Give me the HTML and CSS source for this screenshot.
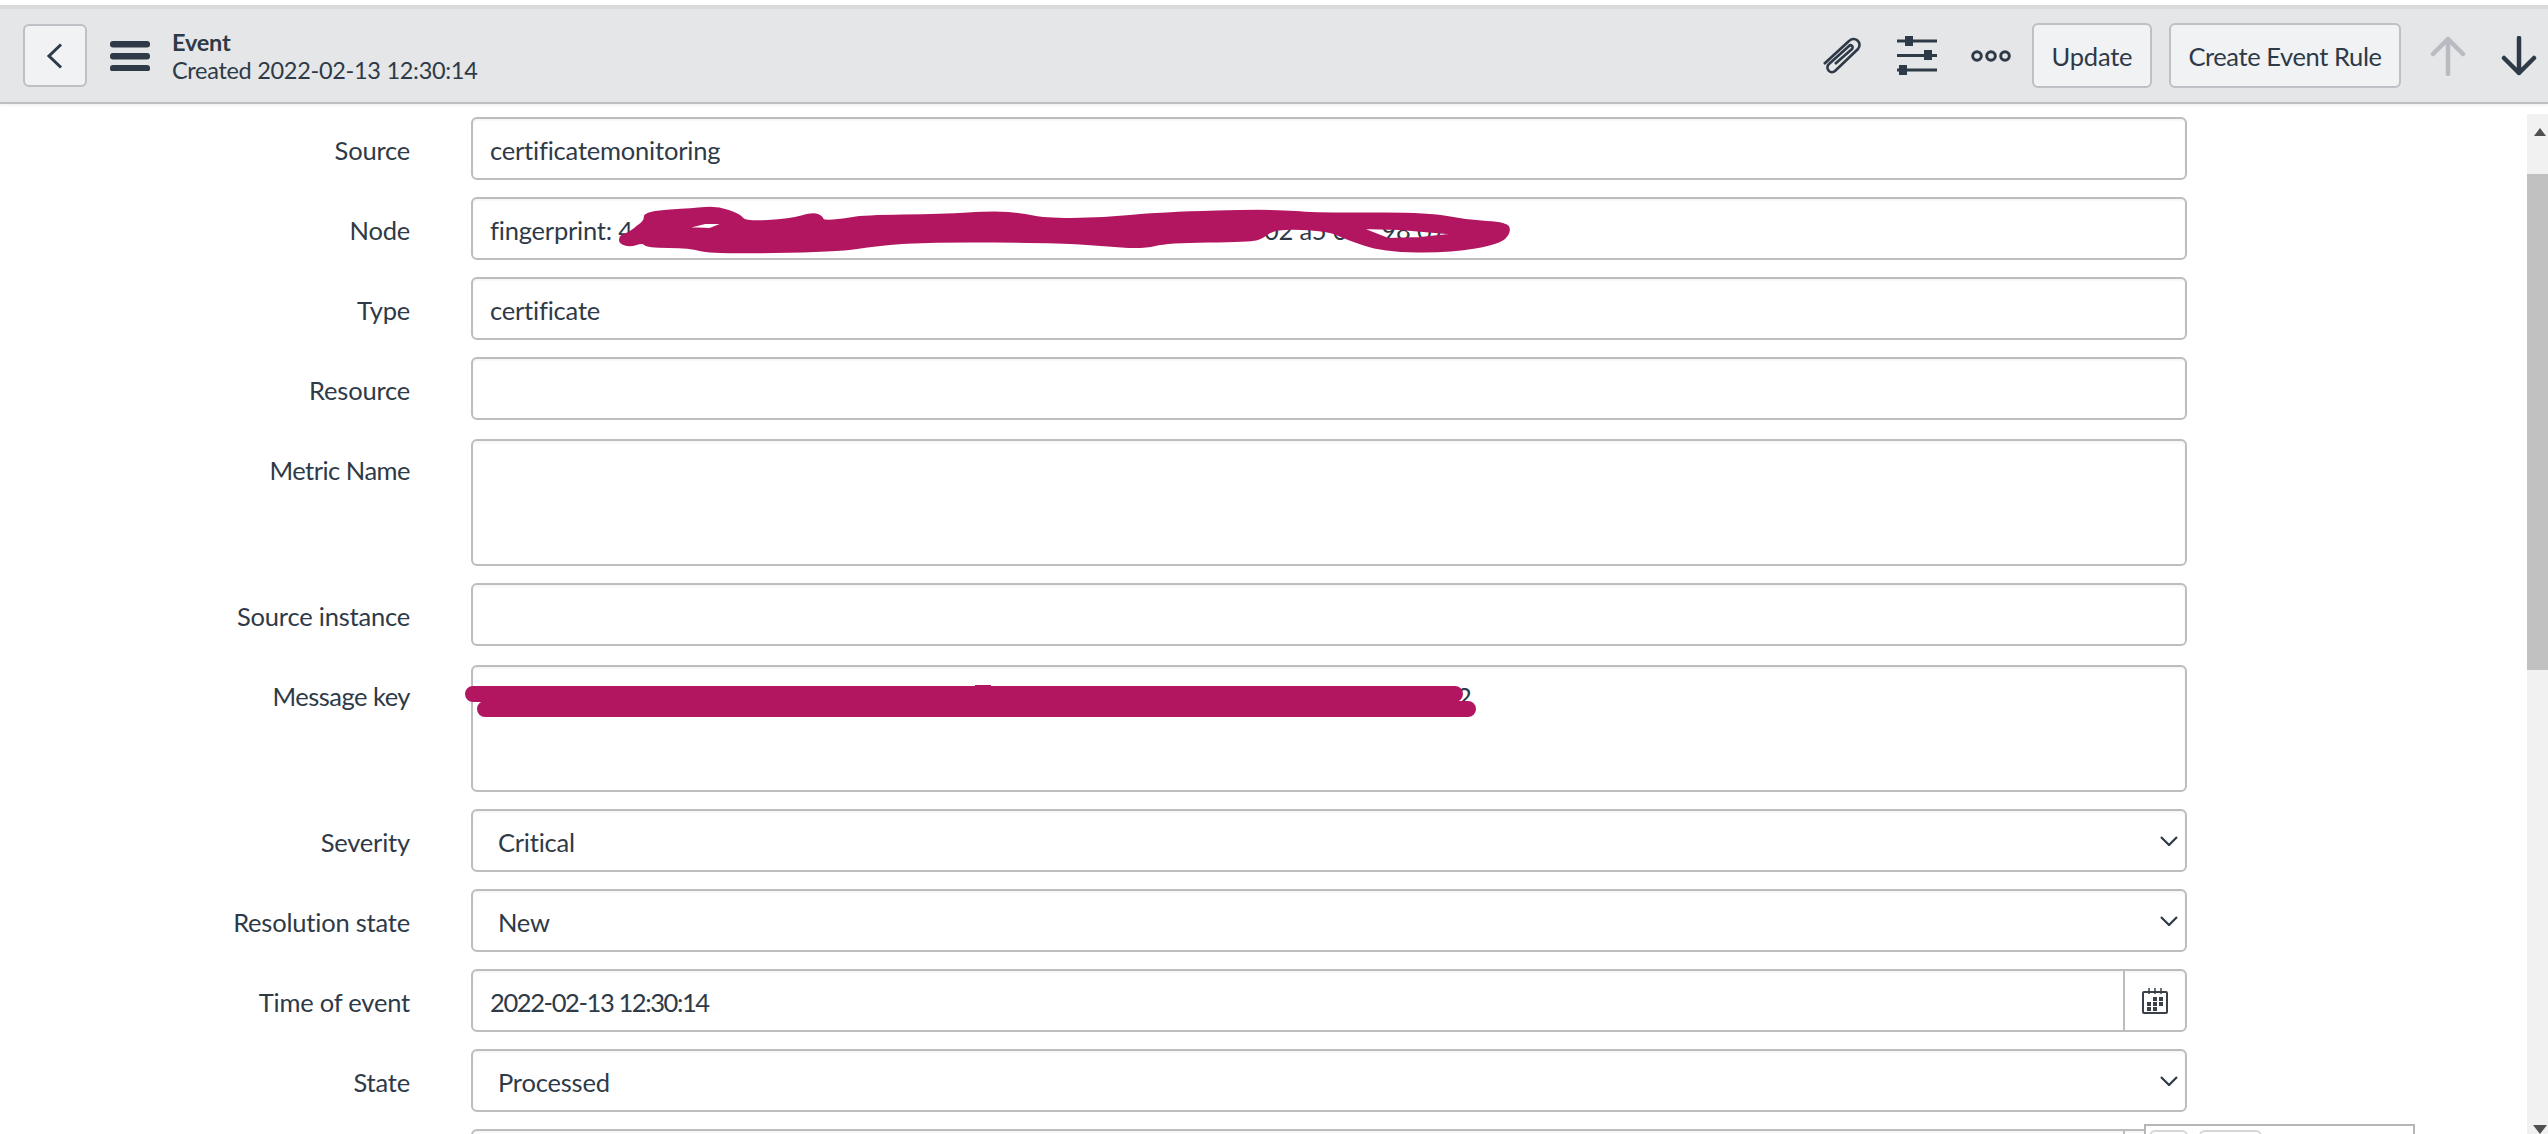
FILE: index.html
```html
<!DOCTYPE html>
<html lang="en">
<head>
<meta charset="utf-8">
<title>Event</title>
<link rel="stylesheet" href="styles.css">
</head>
<body>
<header class="topbar">
  <button class="btn back" aria-label="Back">
    <svg width="18" height="26" viewBox="0 0 18 26"><path d="M15 1.500 3 13l12 11.500" fill="none" stroke="#2e3a47" stroke-width="3"/></svg>
  </button>
  <svg class="menu" width="40" height="30" viewBox="0 0 40 30"><rect y="0" width="40" height="6.500" rx="3" fill="#2e3a47"/><rect y="12" width="40" height="6.500" rx="3" fill="#2e3a47"/><rect y="24" width="40" height="6.500" rx="3" fill="#2e3a47"/></svg>
  <div class="title">
    <div class="title-main">Event</div>
    <div class="title-sub">Created 2022-02-13 12:30:14</div>
  </div>
  <div class="tools">
    <svg width="40" height="37" viewBox="0 0 40 37"><path d="M1 27 26 4a6 6 0 0 1 9 8L12 34a4.500 4.500 0 0 1-6-7L26 9a2 2 0 0 1 3 3L12 27" fill="none" stroke="#2e3a47" stroke-width="2.600"/></svg>
    <svg width="40" height="40" viewBox="0 0 40 40"><g stroke="#2e3a47" stroke-width="3"><path d="M0 5h40M0 19.500h40M0 34h40"/></g><g fill="#2e3a47"><rect x="8" y="0" width="8" height="10"/><rect x="27" y="14" width="8" height="10"/><rect x="2" y="29" width="8" height="10"/></g></svg>
    <svg width="40" height="14" viewBox="0 0 40 14"><g fill="none" stroke="#2e3a47" stroke-width="3"><circle cx="6" cy="7" r="4.300"/><circle cx="20" cy="7" r="4.300"/><circle cx="34" cy="7" r="4.300"/></g></svg>
  </div>
  <div class="actions">
    <button class="btn action update">Update</button>
    <button class="btn action create">Create Event Rule</button>
  </div>
  <div class="nav">
    <svg width="36" height="40" viewBox="0 0 36 40"><path d="M18 38V3M3 18 18 3l15 15" fill="none" stroke="#b8bbbf" stroke-width="4.500" stroke-linecap="round" stroke-linejoin="round"/></svg>
    <svg width="36" height="40" viewBox="0 0 36 40"><path d="M18 2v35M3 22l15 15 15-15" fill="none" stroke="#2e3a47" stroke-width="4.500" stroke-linecap="round" stroke-linejoin="round"/></svg>
  </div>
</header>

<div class="content">
  <main class="form">
    <div class="row"><label class="label">Source</label><div class="field">certificatemonitoring</div></div>
    <div class="row"><label class="label">Node</label><div class="field"><span>fingerprint: 4</span><span class="node-mid">02 a5 0</span><span class="node-end">98 07</span><span class="node-tail">1</span></div></div>
    <div class="row"><label class="label">Type</label><div class="field">certificate</div></div>
    <div class="row"><label class="label">Resource</label><div class="field"></div></div>
    <div class="row tall"><label class="label">Metric Name</label><div class="field area"></div></div>
    <div class="row"><label class="label">Source instance</label><div class="field"></div></div>
    <div class="row tall"><label class="label">Message key</label><div class="field area"><span class="key-end">2</span></div></div>
    <div class="row"><label class="label">Severity</label><div class="field select"><span>Critical</span><svg class="chev" width="18" height="10" viewBox="0 0 18 10"><path d="M1 1l8 8 8-8" fill="none" stroke="#2e3a47" stroke-width="2.200"/></svg></div></div>
    <div class="row"><label class="label">Resolution state</label><div class="field select"><span>New</span><svg class="chev" width="18" height="10" viewBox="0 0 18 10"><path d="M1 1l8 8 8-8" fill="none" stroke="#2e3a47" stroke-width="2.200"/></svg></div></div>
    <div class="row"><label class="label">Time of event</label><div class="field date"><span class="date-value">2022-02-13 12:30:14</span><span class="addon"><svg width="26" height="26" viewBox="0 0 26 26"><rect x="1" y="4" width="24" height="21" rx="1" fill="none" stroke="#3a4149" stroke-width="2"/><path d="M7 0v6M13 0v6M19 0v6" stroke="#3a4149" stroke-width="1.500"/><g fill="#3a4149"><rect x="11" y="9" width="4" height="4"/><rect x="17" y="9" width="4" height="4"/><rect x="5" y="14" width="4" height="4"/><rect x="11" y="14" width="4" height="4"/><rect x="17" y="14" width="4" height="4"/><rect x="5" y="19" width="4" height="4"/><rect x="11" y="19" width="4" height="4"/></g></svg></span></div></div>
    <div class="row"><label class="label">State</label><div class="field select"><span>Processed</span><svg class="chev" width="18" height="10" viewBox="0 0 18 10"><path d="M1 1l8 8 8-8" fill="none" stroke="#2e3a47" stroke-width="2.200"/></svg></div></div>
    <div class="row"><label class="label"></label><div class="field date"><span class="date-value"></span><span class="addon"></span></div></div>
  </main>
  <aside class="scrollbar">
    <div class="arrow-up"></div>
    <div class="thumb"></div>
    <div class="arrow-down"></div>
  </aside>
</div>

<div class="popup"><span class="pill first"></span><span class="pill second"></span></div>

<svg class="scribble" width="2548" height="1134" viewBox="0 0 2548 1134">
  <path fill="#b31661" stroke="#b31661" stroke-width="2" fill-rule="evenodd" d="M622 236Q632 232 638 226Q645 222 645 216Q647 212 670 210.500Q693 209 705 208Q717 207 728.500 211Q740 215 742.500 218.500Q745 222 767.500 221Q790 220 801.500 216.500Q813 213 817.500 215Q822 217 822.500 219Q823 221 833 220.500Q843 220 853 218Q863 216 903 215.500Q943 215 968 213.500Q993 212 1008 213Q1023 214 1033 216.500Q1043 219 1071.500 219Q1100 219 1130 216Q1160 213 1216.500 211.500Q1273 210 1295 212Q1317 214 1372 213.500Q1427 213 1447 217Q1467 221 1487 222Q1507 223 1508.500 227.500Q1510 232 1505 237.500Q1500 243 1475 247.500Q1450 252 1416.500 251.500Q1383 251 1364 244.500Q1345 238 1336.500 234Q1328 230 1301.500 229Q1275 228 1268.500 233Q1262 238 1256 239.500Q1250 241 1208.500 241.500Q1167 242 1155 245Q1143 248 1121.500 246.500Q1100 245 1080 243.500Q1060 242 993.500 241.500Q927 241 902 243Q877 245 857 248Q837 251 773.500 252Q710 253 700 250Q690 247 668.500 247Q647 247 645 244.500Q643 242 636.500 244Q630 246 625 244.500Q620 243 620 240Q620 237 622 236ZM685 228 705 223 725 223 710 229ZM1360 228 1400 229 1458 234 1420 238 1388 239Z"/>
  <path d="M473 694H1455M485 709H1468" stroke="#b31661" stroke-width="16" stroke-linecap="round"/>
  <path d="M975 687h16" stroke="#b31661" stroke-width="4"/>
</svg>
</body>
</html>
```

FILE: styles.css
```css
* { box-sizing: border-box; }

html, body {
  margin: 0;
  height: 100vh;
  overflow: hidden;
  background: #fff;
}

body {
  font-family: "Lato", "Liberation Sans", sans-serif;
  font-size: 25.500px;
  letter-spacing: -0.200px;
  color: #2e3a47;
}

.topbar {
  margin-top: 5px;
  height: 99px;
  display: flex;
  align-items: center;
  padding: 0 11px 0 23px;
  background: #e4e6e7;
  border-top: 4px solid #d9dbdb;
  border-bottom: 2px solid #bdbfc1;
  box-shadow: 0 1px 3px rgba(0, 0, 0, 0.08);
}

.btn {
  background: #f0f2f4;
  border: 2px solid #bdc0c4;
  border-radius: 6px;
  color: #2e3a47;
  font: inherit;
  letter-spacing: inherit;
  padding: 0;
  display: flex;
  align-items: center;
  justify-content: center;
}

.back { width: 64px; height: 63px; }
.menu { margin-left: 23px; }
.title { margin-left: 22px; }
.title-main { font-size: 23.500px; font-weight: 700; line-height: 28px; }
.title-sub { font-size: 23.500px; letter-spacing: -0.300px; line-height: 28px; }

.tools {
  margin-left: auto;
  display: flex;
  align-items: center;
  gap: 34px;
}

.actions {
  margin-left: 21px;
  display: flex;
  gap: 17px;
}

.action { height: 65px; }
.update { width: 120px; }
.create { width: 232px; letter-spacing: -0.400px; }

.nav {
  margin-left: 29px;
  display: flex;
  gap: 35px;
}

.content {
  display: flex;
  margin-top: 10px;
  height: 1020px;
  overflow: hidden;
}

.form {
  flex: 1;
  padding-top: 3px;
}

.row {
  display: grid;
  grid-template-columns: 410px 1716px;
  column-gap: 61px;
  margin-bottom: 17px;
}

.tall { margin-top: 19px; }
.row:has(+ .tall) { margin-bottom: 0; }

.label {
  text-align: right;
  height: 63px;
  line-height: 66px;
}

.tall .label { line-height: 62px; letter-spacing: -0.500px; }

.field {
  height: 63px;
  border: 2px solid #bdbdbd;
  border-radius: 6px;
  background: #fff;
  box-shadow: inset 0 2px 2px rgba(0, 0, 0, 0.04);
  padding: 2px 17px 0;
  line-height: 59px;
  display: flex;
}

.area { height: 127px; padding-top: 0; }
.key-end { margin-left: 967px; height: 30px; line-height: 30px; margin-top: 14px; }
.node-mid { margin-left: 631px; }
.node-end { margin-left: 34px; }
.node-tail { margin-left: 39px; }

.select {
  justify-content: space-between;
  align-items: center;
  padding: 0 7px 0 25px;
}

.select span { padding-top: 3px; }

.date { padding: 0; justify-content: space-between; }
.date-value { padding: 2px 0 0 17px; letter-spacing: -1.400px; }
.addon {
  width: 62px;
  border-left: 2px solid #bdbdbd;
  display: flex;
  align-items: center;
  justify-content: center;
}

.scrollbar {
  width: 21px;
  background: #f1f1f1;
  display: flex;
  flex-direction: column;
  align-items: center;
  padding-top: 14px;
}

.arrow-up {
  width: 0;
  height: 0;
  border-left: 6px solid transparent;
  border-right: 6px solid transparent;
  border-bottom: 8px solid #505050;
  margin-left: 4px;
}

.thumb {
  align-self: stretch;
  height: 497px;
  margin-top: 38px;
  background: #c1c1c1;
}

.arrow-down {
  width: 0;
  height: 0;
  margin-top: 455px;
  margin-left: 4px;
  border-left: 7px solid transparent;
  border-right: 7px solid transparent;
  border-top: 9px solid #505050;
}

.popup {
  position: absolute;
  left: 2144px;
  top: 1124px;
  width: 271px;
  height: 30px;
  background: #fff;
  border: 2px solid #b4b6b8;
  border-bottom: 0;
  display: flex;
  gap: 11px;
  padding: 4px 0 0 3px;
}

.pill {
  height: 30px;
  border: 2px solid #d4d6d8;
  border-radius: 6px;
}
.first { width: 39px; }
.second { width: 63px; }

.scribble {
  position: absolute;
  left: 0;
  top: 0;
  pointer-events: none;
}
```
